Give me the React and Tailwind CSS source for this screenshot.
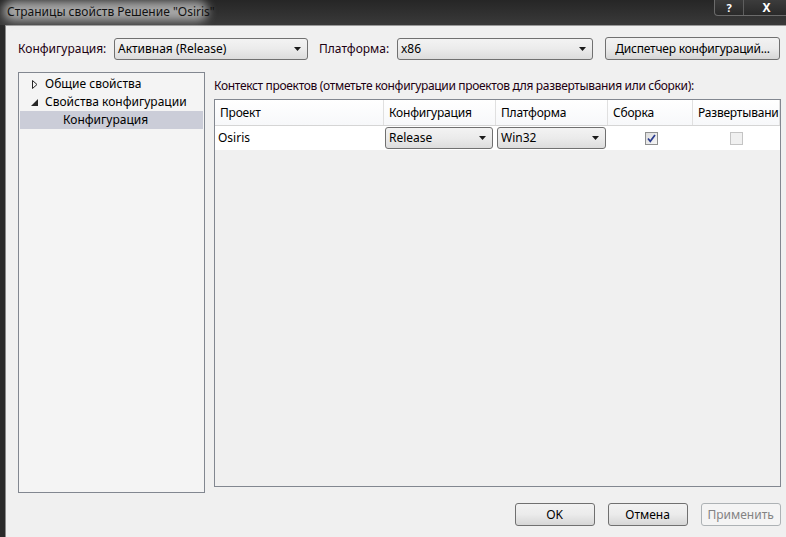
import React from "react";

const Combo = ({ value, className = "" }) => (
  <div
    className={`flex items-center justify-between h-[22px] rounded-[3px] border border-[#707070] bg-gradient-to-b from-[#f3f3f3] via-[#ebebeb] to-[#dcdcdc] pl-[3px] pr-[6px] ${className}`}
  >
    <span className="text-[12px] text-black leading-none">{value}</span>
    <svg width="7" height="4" viewBox="0 0 7 4">
      <path d="M0 0h7L3.5 4z" fill="#1a1a1a" />
    </svg>
  </div>
);

const Btn = ({ children, className = "", disabled }) => (
  <div
    className={`flex items-center justify-center h-[23px] rounded-[3px] border text-[12px] ${
      disabled
        ? "border-[#adb2b5] bg-[#f4f4f4] text-[#838383]"
        : "border-[#707070] bg-gradient-to-b from-[#f2f2f2] via-[#ebebeb] to-[#d6d6d6] text-black"
    } ${className}`}
  >
    {children}
  </div>
);

const Check = ({ checked, disabled }) => (
  <div
    className={`w-[13px] h-[13px] border flex items-center justify-center ${
      disabled
        ? "border-[#c4c4c4] bg-[#f0f0f0]"
        : "border-[#8e8f8f] bg-gradient-to-br from-[#dcdcdc] to-[#f6f6f6]"
    }`}
  >
    {checked && (
      <svg width="9" height="9" viewBox="0 0 9 9">
        <path d="M1 4.5l2.3 2.8L8 1" stroke="#2b3c8f" strokeWidth="1.7" fill="none" />
      </svg>
    )}
  </div>
);

export default function App() {
  const cols = [
    { label: "Проект", w: "w-[169px]" },
    { label: "Конфигурация", w: "w-[112px]" },
    { label: "Платформа", w: "w-[112px]" },
    { label: "Сборка", w: "w-[85px]" },
    { label: "Развертывани", w: "flex-1" },
  ];

  return (
    <div className="w-[786px] h-[537px] overflow-hidden flex flex-col bg-[#2c2c2c] font-['Noto_Sans',sans-serif] text-[12px]">
      {/* title bar */}
      <div className="relative h-[25px] shrink-0 bg-gradient-to-b from-[#262626] to-[#3a3a3a]">
        <div className="absolute left-[3px] top-[1px] h-[20px] w-[205px] rounded-full bg-[#d8d8d8]/70 blur-[5px]"></div>
        <span className="absolute left-[7px] top-[3px] text-[12px] text-[#111] whitespace-nowrap">
          Страницы свойств Решение "Osiris"
        </span>
        <div className="absolute -right-[4px] top-0 flex h-[16px] rounded-b-[4px] border border-t-0 border-[#6b6b6b] bg-gradient-to-b from-[#3c3c3c] to-[#2a2a2a]">
          <div className="w-[29px] flex items-center justify-center border-r border-[#5e5e5e] text-white text-[11px] font-bold leading-[14px]">
            ?
          </div>
          <div className="w-[45px] flex items-center justify-center text-white text-[12px] font-bold leading-[14px]">
            X
          </div>
        </div>
      </div>

      <div className="flex flex-1">
        <div className="w-[6px] shrink-0 border-r border-[#8a8a8a] bg-[#2a2a2a]"></div>
        <div className="flex-1 flex flex-col bg-[#f0f0f0] border-t border-[#9a9a9a] pl-[12px] pr-[7px] pt-[11px]">
          {/* top row */}
          <div className="flex items-center h-[23px]">
            <span className="w-[96px] text-[#1d0012]">Конфигурация:</span>
            <Combo value="Активная (Release)" className="w-[194px]" />
            <span className="ml-[11px] w-[78px] text-[#1d0012]">Платформа:</span>
            <Combo value="x86" className="w-[196px]" />
            <Btn className="ml-[12px] w-[175px] tracking-[-0.2px]">Диспетчер конфигураций...</Btn>
          </div>

          {/* main */}
          <div className="flex mt-[12px] h-[421px]">
            <div className="w-[187px] border border-[#828790] bg-[#f4f4f4] pt-[2px] px-[1px]">
              <div className="flex items-center h-[18px] pl-[12px]">
                <svg width="6" height="9" viewBox="0 0 6 9" className="mr-[7px]">
                  <path d="M0.5 0.5L5 4.5L0.5 8.5z" fill="none" stroke="#262626" />
                </svg>
                <span>Общие свойства</span>
              </div>
              <div className="flex items-center h-[18px] pl-[11px]">
                <svg width="7" height="7" viewBox="0 0 7 7" className="mr-[7px]">
                  <path d="M7 0V7H0z" fill="#262626" />
                </svg>
                <span>Свойства конфигурации</span>
              </div>
              <div className="flex items-center h-[18px] pl-[43px] bg-[#cbcdd8]">
                <span>Конфигурация</span>
              </div>
            </div>

            <div className="flex-1 flex flex-col ml-[9px]">
              <div className="h-[27px] pt-[6px] text-[#1d0012] whitespace-nowrap leading-[16px] tracking-[-0.33px]">
                Контекст проектов (отметьте конфигурации проектов для развертывания или сборки):
              </div>
              <div className="h-[388px] border border-[#828790] bg-[#f0f0f0] flex flex-col">
                <div className="flex h-[26px] bg-gradient-to-b from-white to-[#f7f8fa] border-b border-[#d5d5d5]">
                  {cols.map((c, i) => (
                    <div
                      key={i}
                      className={`${c.w} flex items-center pl-[5px] border-r border-[#e0e0e0] whitespace-nowrap overflow-hidden tracking-[-0.2px] ${
                        i === 4 ? "pl-[4px]" : ""
                      }`}
                    >
                      {c.label}
                    </div>
                  ))}
                </div>
                <div className="flex h-[24px] bg-white items-center">
                  <div className="w-[169px] pl-[3px]">Osiris</div>
                  <div className="w-[112px] pl-[1px]">
                    <Combo value="Release" className="w-[108px]" />
                  </div>
                  <div className="w-[112px] pl-[1px]">
                    <Combo value="Win32" className="w-[109px]" />
                  </div>
                  <div className="w-[85px] flex justify-center pl-[1px]">
                    <Check checked />
                  </div>
                  <div className="flex-1 flex justify-center">
                    <Check disabled />
                  </div>
                </div>
              </div>
            </div>
          </div>

          {/* buttons */}
          <div className="flex justify-end mt-[10px] gap-[13px]">
            <Btn className="w-[80px]">OK</Btn>
            <Btn className="w-[80px]">Отмена</Btn>
            <Btn className="w-[80px]" disabled>
              Применить
            </Btn>
          </div>
        </div>
      </div>
    </div>
  );
}
